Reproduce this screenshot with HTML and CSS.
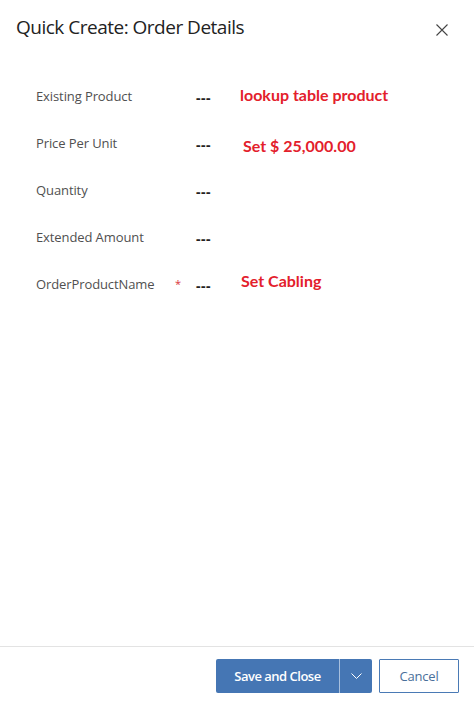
FILE: index.html
```html
<!DOCTYPE html>
<html>
<head>
<meta charset="utf-8">
<link rel="stylesheet" href="styles.css">
</head>
<body>
<div class="dialog">
  <header class="head">
    <h1 class="title">Quick Create: Order Details</h1>
    <button class="close" aria-label="Close">
      <svg width="12" height="12" viewBox="0 0 12 12"><path d="M0.5 0.5 L11.5 11.5 M11.5 0.5 L0.5 11.5" stroke="#444" stroke-width="1.1" fill="none"/></svg>
    </button>
  </header>
  <main class="fields">
    <div class="row">
      <span class="label">Existing Product</span><span class="req"></span><span class="val">---</span><span class="note">lookup table product</span>
    </div>
    <div class="row">
      <span class="label">Price Per Unit</span><span class="req"></span><span class="val">---</span><span class="note note-shift">Set $ 25,000.00</span>
    </div>
    <div class="row">
      <span class="label">Quantity</span><span class="req"></span><span class="val">---</span><span class="note"></span>
    </div>
    <div class="row">
      <span class="label">Extended Amount</span><span class="req"></span><span class="val">---</span><span class="note"></span>
    </div>
    <div class="row">
      <span class="label">OrderProductName</span><span class="req">*</span><span class="val">---</span><span class="note note-up">Set Cabling</span>
    </div>
  </main>
  <footer class="foot">
    <div class="split">
      <button class="primary">Save and Close</button>
      <button class="drop" aria-label="More">
        <svg width="11" height="6" viewBox="0 0 11 6"><path d="M0.5 0.5 L5.5 5.5 L10.5 0.5" stroke="#fff" stroke-width="1" fill="none"/></svg>
      </button>
    </div>
    <button class="cancel">Cancel</button>
  </footer>
</div>
</body>
</html>
```
FILE: styles.css
```css
* { box-sizing: border-box; }
html, body { margin: 0; padding: 0; background: #fff; }
body { font-family: "Open Sans", "Noto Sans", sans-serif; color: #333; }
.dialog { width: 474px; height: 701px; display: flex; flex-direction: column; }
.head { display: flex; justify-content: space-between; align-items: flex-start; padding: 14px 26px 0 16px; }
.title { margin: 0; font-size: 19px; font-weight: 400; color: #222; line-height: 26px; letter-spacing: -0.5px; }
.close { background: none; border: 0; padding: 0; margin-top: 10px; width: 12px; height: 12px; display: flex; }
.fields { flex: 1; padding: 46px 0 0 36px; display: flex; flex-direction: column; }
.row { display: grid; grid-template-columns: 139px 21px 44px 1fr; height: 47px; align-items: start; }
.label { font-size: 13px; color: #505050; line-height: 20px; letter-spacing: -0.1px; }
.req { color: #d9343a; font-size: 11px; line-height: 20px; padding-left: 0; }
.val { font-size: 14px; font-weight: 700; color: #222; line-height: 20px; padding-top: 2px; letter-spacing: 0.5px; }
.note { font-family: Lato, "Liberation Sans", sans-serif; font-weight: 700; font-size: 16px; color: #e3202b; line-height: 20px; margin-top: -1px; }
.note-shift { padding-left: 3px; margin-top: 3px; }
.note-up { padding-left: 1px; margin-top: -3px; }
.foot { border-top: 1px solid #e3e3e3; height: 55px; display: flex; justify-content: flex-end; align-items: flex-start; padding: 12px 15px 0 0; gap: 7px; }
.split { display: flex; height: 34px; }
.primary { background: #4576b4; color: #fff; border: 0; font-family: "Open Sans", sans-serif; font-weight: 600; font-size: 13px; width: 123px; height: 34px; border-radius: 2px 0 0 2px; letter-spacing: -0.5px; padding: 0; }
.drop { background: #4576b4; border: 0; border-left: 1px solid #a8c0de; width: 33px; height: 34px; border-radius: 0 2px 2px 0; display: flex; align-items: center; justify-content: center; padding: 0; }
.cancel { background: #fff; border: 1px solid #4a7ab5; color: #4a6f9a; font-family: "Open Sans", sans-serif; font-size: 13px; width: 80px; height: 34px; padding: 0; border-radius: 1px; letter-spacing: -0.2px; }
```
